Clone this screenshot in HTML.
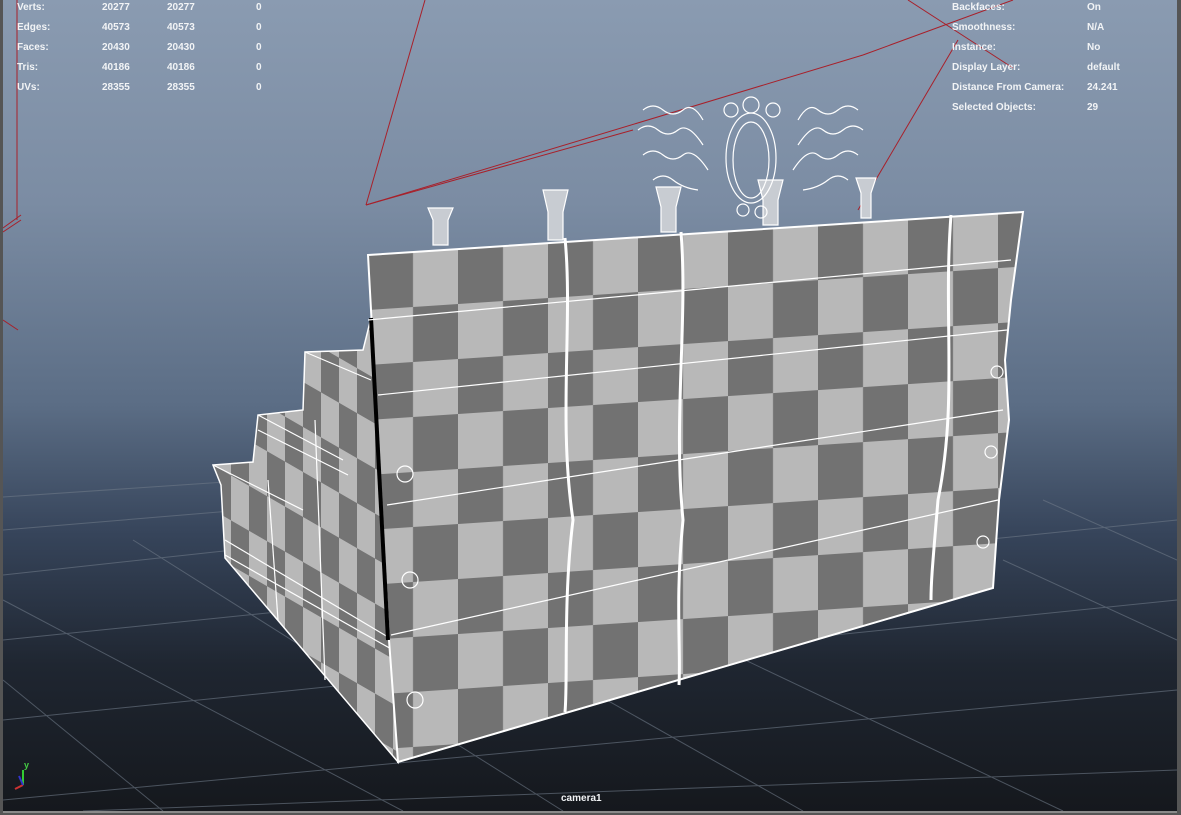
<!DOCTYPE html>
<html><head><meta charset="utf-8"><style>
html,body{margin:0;padding:0}
body{width:1181px;height:815px;overflow:hidden;background:#555;position:relative;font-family:"Liberation Sans",Arial,sans-serif}
#vp{position:absolute;left:3px;top:0;width:1174px;height:811px;background:linear-gradient(#8a9bb1 0%,#7b8ca3 25%,#5b6d85 50%,#36445a 66%,#1f2631 82%,#15181d 100%);overflow:hidden;border-bottom:2px solid #8a8a8a}
.hud{position:absolute;color:#f2f4f6;font-size:10px;font-weight:bold;line-height:20px}
</style></head><body>
<div id="vp">
<svg width="1174" height="811" style="position:absolute;left:0;top:0">
<defs>
<pattern id="ck" width="90" height="110" patternUnits="userSpaceOnUse" patternTransform="translate(365,255) skewY(-3.8)">
<rect width="90" height="110" fill="#b8b8b8"/><rect width="45" height="55" fill="#727272"/><rect x="45" y="55" width="45" height="55" fill="#727272"/>
</pattern>
<pattern id="ck2" width="36" height="90" patternUnits="userSpaceOnUse" patternTransform="translate(210,465) skewY(30)">
<rect width="36" height="90" fill="#b8b8b8"/><rect width="18" height="45" fill="#747474"/><rect x="18" y="45" width="18" height="45" fill="#747474"/>
</pattern>
</defs>
<g stroke="#6f7a88" stroke-width="1" opacity="0.6" fill="none">
<line x1="0" y1="497" x2="400" y2="470"/><line x1="0" y1="530" x2="300" y2="505"/><line x1="0" y1="575" x2="230" y2="550"/>
<line x1="0" y1="640" x2="1174" y2="520"/><line x1="0" y1="720" x2="1174" y2="600"/><line x1="0" y1="800" x2="1174" y2="690"/>
<line x1="80" y1="811" x2="1174" y2="770"/>
<line x1="0" y1="600" x2="400" y2="811"/><line x1="130" y1="540" x2="560" y2="811"/><line x1="250" y1="500" x2="800" y2="811"/>
<line x1="700" y1="640" x2="1060" y2="811"/><line x1="1000" y1="560" x2="1174" y2="640"/><line x1="1040" y1="500" x2="1174" y2="560"/>
<line x1="0" y1="680" x2="160" y2="811"/>
</g>
<g stroke="#a8202a" stroke-width="1" fill="none">
<line x1="363" y1="205" x2="422" y2="0"/><line x1="363" y1="205" x2="860" y2="55"/><line x1="363" y1="205" x2="630" y2="130"/>
<line x1="860" y1="55" x2="1010" y2="0"/><line x1="905" y1="0" x2="1010" y2="68"/><line x1="955" y1="40" x2="855" y2="210"/>
<line x1="0" y1="228" x2="18" y2="215"/><line x1="18" y1="220" x2="0" y2="232"/><line x1="0" y1="320" x2="15" y2="330"/><line x1="14" y1="0" x2="14" y2="220"/>
</g>
<polygon points="210,465 250,462 255,415 300,410 302,352 360,350 368,318 395,762 222,558 218,485" fill="url(#ck2)" stroke="#fff" stroke-width="1.5"/>
<g stroke="#fff" fill="none" stroke-width="1.2"><line x1="210" y1="465" x2="300" y2="510"/><line x1="255" y1="415" x2="340" y2="460"/><line x1="302" y1="352" x2="368" y2="380"/><line x1="265" y1="480" x2="275" y2="620"/><line x1="312" y1="420" x2="322" y2="680"/><line x1="222" y1="540" x2="390" y2="640"/><line x1="222" y1="555" x2="390" y2="650"/><line x1="255" y1="430" x2="345" y2="475"/></g>
<polygon points="365,255 1020,212 1008,300 1002,360 1006,420 996,500 990,588 395,762 386,640 365,255" fill="url(#ck)" stroke="#fff" stroke-width="2"/>
<path d="M368,318 L385,640" stroke="#000" stroke-width="4"/>
<g stroke="#fff" fill="none" stroke-width="1.2">
<line x1="365" y1="320" x2="1008" y2="260"/><line x1="375" y1="395" x2="1004" y2="330"/><line x1="384" y1="505" x2="1000" y2="410"/><line x1="388" y1="635" x2="995" y2="500"/>
<path d="M562,238 C570,320 555,420 570,520 C560,600 565,680 562,712" stroke-width="3"/>
<path d="M678,232 C685,320 670,420 680,520 C672,600 678,650 676,685" stroke-width="3"/>
<path d="M948,215 C940,320 955,400 935,500 C930,560 928,580 928,600" stroke-width="3"/>
</g>
<g stroke="#fff" fill="#c8ccd2" stroke-width="1.2">
<path d="M430,245 l0,-25 l-5,-12 h25 l-5,12 l0,25z"/><path d="M545,240 l0,-28 l-5,-22 h25 l-5,22 l0,28z"/><path d="M658,232 l0,-25 l-5,-20 h25 l-5,20 l0,25z"/><path d="M760,225 l0,-25 l-5,-20 h25 l-5,20 l0,25z"/><path d="M858,218 l0,-25 l-5,-15 h20 l-5,15 l0,25z"/>
</g>
<g stroke="#fff" fill="none" stroke-width="1.2">
<ellipse cx="748" cy="158" rx="25" ry="45"/><ellipse cx="748" cy="160" rx="18" ry="38"/>
<path d="M640,110 q10,-8 20,0 t20,0 t20,10 M635,130 q10,-8 20,0 t20,0 t25,15 M640,155 q10,-8 20,0 t20,0 t25,15 M650,180 q10,-8 20,0 t25,10 M855,110 q-10,-8 -20,0 t-20,0 t-20,10 M860,130 q-10,-8 -20,0 t-20,0 t-25,15 M855,155 q-10,-8 -20,0 t-20,0 t-25,15 M845,180 q-10,-8 -20,0 t-25,10"/>
<circle cx="748" cy="105" r="8"/><circle cx="770" cy="110" r="7"/><circle cx="728" cy="110" r="7"/><circle cx="740" cy="210" r="6"/><circle cx="758" cy="212" r="6"/>
<circle cx="402" cy="474" r="8"/><circle cx="407" cy="580" r="8"/><circle cx="412" cy="700" r="8"/><circle cx="994" cy="372" r="6"/><circle cx="988" cy="452" r="6"/><circle cx="980" cy="542" r="6"/>
</g>
<g stroke-width="2"><line x1="20" y1="785" x2="20" y2="770" stroke="#3c3"/><line x1="20" y1="785" x2="12" y2="789" stroke="#c33"/><line x1="20" y1="785" x2="16" y2="776" stroke="#33c"/></g>
</svg>
<div class="hud" style="left:14px;top:-2px">Verts:<br>Edges:<br>Faces:<br>Tris:<br>UVs:</div>
<div class="hud" style="left:99px;top:-2px">20277<br>40573<br>20430<br>40186<br>28355</div>
<div class="hud" style="left:164px;top:-2px">20277<br>40573<br>20430<br>40186<br>28355</div>
<div class="hud" style="left:253px;top:-2px">0<br>0<br>0<br>0<br>0</div>
<div class="hud" style="left:949px;top:-2px">Backfaces:<br>Smoothness:<br>Instance:<br>Display Layer:<br>Distance From Camera:<br>Selected Objects:</div>
<div class="hud" style="left:1084px;top:-2px">On<br>N/A<br>No<br>default<br>24.241<br>29</div>
<div class="hud" style="left:21px;top:755px;color:#4c4;font-size:9px">y</div>
<div class="hud" style="left:558px;top:789px">camera1</div>
</div>
</body></html>
